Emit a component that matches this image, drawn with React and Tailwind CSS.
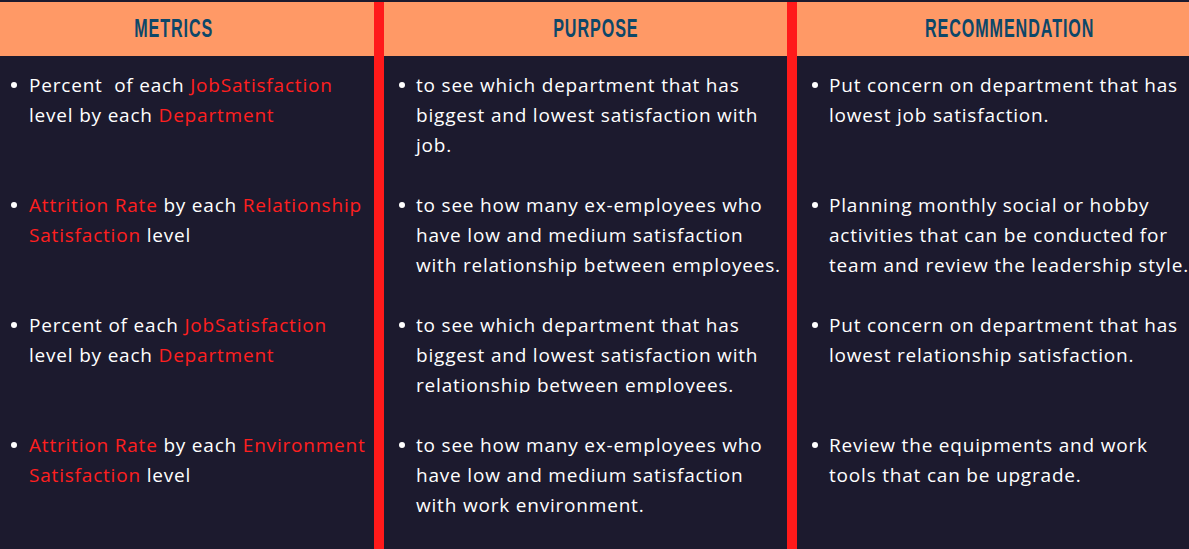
const RED = 'text-[#ff1f1f]';

const rows = [
  {
    metric: [
      [['Percent  of each ', 0], ['JobSatisfaction', 1]],
      [['level by each ', 0], ['Department', 1]],
    ],
    purpose: ['to see which department that has', 'biggest and lowest satisfaction with', 'job.'],
    rec: ['Put concern on department that has', 'lowest job satisfaction.'],
  },
  {
    metric: [
      [['Attrition Rate', 1], [' by each ', 0], ['Relationship', 1]],
      [['Satisfaction', 1], [' level', 0]],
    ],
    purpose: ['to see how many ex-employees who', 'have low and medium satisfaction', 'with relationship between employees.'],
    rec: ['Planning monthly social or hobby', 'activities that can be conducted for', 'team and review the leadership style.'],
  },
  {
    metric: [
      [['Percent of each ', 0], ['JobSatisfaction', 1]],
      [['level by each ', 0], ['Department', 1]],
    ],
    purpose: ['to see which department that has', 'biggest and lowest satisfaction with', 'relationship between employees.'],
    rec: ['Put concern on department that has', 'lowest relationship satisfaction.'],
    clip: true,
  },
  {
    metric: [
      [['Attrition Rate', 1], [' by each ', 0], ['Environment', 1]],
      [['Satisfaction', 1], [' level', 0]],
    ],
    purpose: ['to see how many ex-employees who', 'have low and medium satisfaction', 'with work environment.'],
    rec: ['Review the equipments and work', 'tools that can be upgrade.'],
  },
];

function Bullet({ children, first, clip }) {
  return (
    <div className={`flex h-[120px] ${first ? 'pl-[11px]' : 'pl-[15px]'}`}>
      <span className="mt-[12px] h-[6px] w-[6px] shrink-0 rounded-full bg-white" />
      <div className={`${first ? 'ml-[12px]' : 'ml-[11px]'} ${clip ? 'h-[83px] overflow-hidden' : ''}`}>
        {children}
      </div>
    </div>
  );
}

function Header({ title, offset }) {
  return (
    <div className={`flex h-[54px] items-center justify-center bg-[#ff9966] pb-[3px] ${offset}`}>
      <span
        className="inline-block scale-x-[0.62] text-[26px] leading-none font-bold tracking-[1.5px] text-[#0d4769]"
        style={{ fontFamily: '"Liberation Sans", sans-serif' }}
      >
        {title}
      </span>
    </div>
  );
}

export default function App() {
  return (
    <div
      className="flex h-[549px] w-[1189px] overflow-hidden bg-[#1c1a2e] pt-[2px] text-[19px] leading-[30px] tracking-[0.8px] text-white"
      style={{ fontFamily: '"Open Sans", "Noto Sans", sans-serif' }}
    >
      <div className="w-[374px] shrink-0">
        <Header title="METRICS" offset="pr-[27px]" />
        <div className="pt-[14px]">
          {rows.map((r, i) => (
            <Bullet key={i} first>
              {r.metric.map((line, j) => (
                <div key={j} className="whitespace-pre">
                  {line.map(([t, red], k) => (
                    <span key={k} className={red ? RED : ''}>{t}</span>
                  ))}
                </div>
              ))}
            </Bullet>
          ))}
        </div>
      </div>
      <div className="w-[413px] shrink-0 border-l-[10px] border-[#ff1a1a]">
        <Header title="PURPOSE" offset="pl-[21px]" />
        <div className="pt-[14px]">
          {rows.map((r, i) => (
            <Bullet key={i} clip={r.clip}>
              {r.purpose.map((l, j) => (
                <div key={j} className="whitespace-nowrap">{l}</div>
              ))}
            </Bullet>
          ))}
        </div>
      </div>
      <div className="min-w-0 flex-1 border-l-[10px] border-[#ff1a1a]">
        <Header title="RECOMMENDATION" offset="pl-[33px]" />
        <div className="pt-[14px]">
          {rows.map((r, i) => (
            <Bullet key={i}>
              {r.rec.map((l, j) => (
                <div key={j} className="whitespace-nowrap">{l}</div>
              ))}
            </Bullet>
          ))}
        </div>
      </div>
    </div>
  );
}
